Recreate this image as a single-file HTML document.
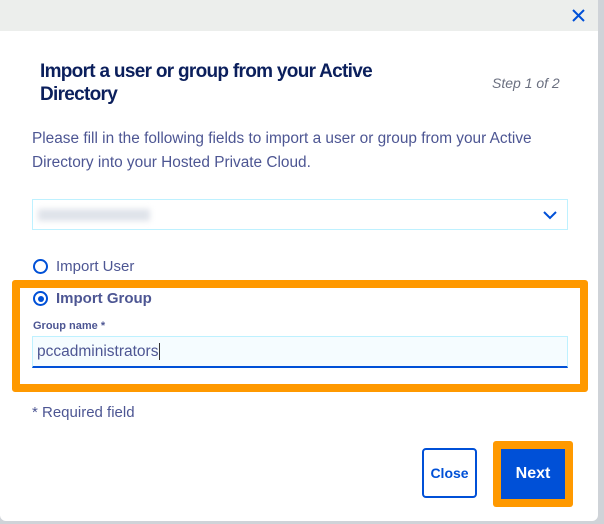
<!DOCTYPE html>
<html><head><style>
*{margin:0;padding:0;box-sizing:border-box}
body{width:604px;height:524px;background:#cfd3d8;font-family:"Liberation Sans",sans-serif;position:relative;overflow:hidden}
.modal{position:absolute;left:0;top:0;width:598px;height:521px;background:#fff;border-radius:0 0 6px 6px;overflow:hidden}
.head{height:31px;background:#eceeec}
.abs{position:absolute}
.title{left:40px;top:60px;font-size:19px;letter-spacing:-0.7px;font-weight:bold;color:#0b1f5c;line-height:23px;width:340px}
.step{left:492px;top:75px;font-size:14px;font-style:italic;color:#6b7080}
.p{left:32px;top:127px;font-size:15.4px;color:#4d5693;line-height:24px;width:540px}
.sel{left:32px;top:199px;width:536px;height:31px;border:1px solid #bef1ff}
.blur{left:5px;top:9px;width:112px;height:12px;background:#dfe3ea;filter:blur(3px)}
.radio{width:15px;height:15px;border:2px solid #0050d7;border-radius:50%}
.lbl{font-size:15px;color:#4d5693}
.orange{left:12px;top:280px;width:576px;height:112px;border:8px solid #ff9900;border-radius:3px}
.inp{left:32px;top:336px;width:536px;height:32px;background:#f5fcff;border:1px solid #bef1ff;border-bottom:2px solid #0050d7;font-size:15.5px;color:#4d5693;padding:6px 0 0 4px}
.btn{font-weight:bold;font-size:14px;display:flex;align-items:center;justify-content:center}
</style></head><body>
<div class="modal">
<div class="head"></div>
<svg class="abs" style="left:571px;top:8px" width="15" height="15" viewBox="0 0 15 15"><path d="M2 2L13 13M13 2L2 13" stroke="#0050d7" stroke-width="2"/></svg>
<div class="abs title">Import a user or group from your Active<br>Directory</div>
<div class="abs step">Step 1 of 2</div>
<div class="abs p">Please fill in the following fields to import a user or group from your Active Directory into your Hosted Private Cloud.</div>
<div class="abs sel"><div class="abs blur"></div>
<svg class="abs" style="left:509px;top:10px" width="16" height="10" viewBox="0 0 16 10"><path d="M2 2L8 8L14 2" stroke="#0050d7" stroke-width="2" fill="none"/></svg></div>
<div class="abs radio" style="left:33px;top:259px"></div>
<div class="abs lbl" style="left:56px;top:258px">Import User</div>
<div class="abs orange"></div>
<div class="abs radio" style="left:33px;top:291px;padding:2.5px"><div style="width:6px;height:6px;border-radius:50%;background:#0050d7"></div></div>
<div class="abs lbl" style="left:56px;top:290px;font-weight:bold">Import Group</div>
<div class="abs" style="left:33px;top:320px;font-size:11px;font-weight:bold;color:#4d5693">Group name *</div>
<div class="abs inp">pccadministrators<span style="border-left:1px solid #333;margin-left:1px"></span></div>
<div class="abs lbl" style="left:32px;top:404px">* Required field</div>
<div class="abs btn" style="left:422px;top:448px;width:55px;height:50px;border:2px solid #0050d7;border-radius:4px;color:#0050d7">Close</div>
<div class="abs" style="left:493px;top:441px;width:80px;height:66px;background:#ff9900;border-radius:3px"></div>
<div class="abs btn" style="left:501px;top:449px;width:64px;height:50px;background:#0050d7;color:#fff;font-size:16px">Next</div>
</div>
</body></html>
